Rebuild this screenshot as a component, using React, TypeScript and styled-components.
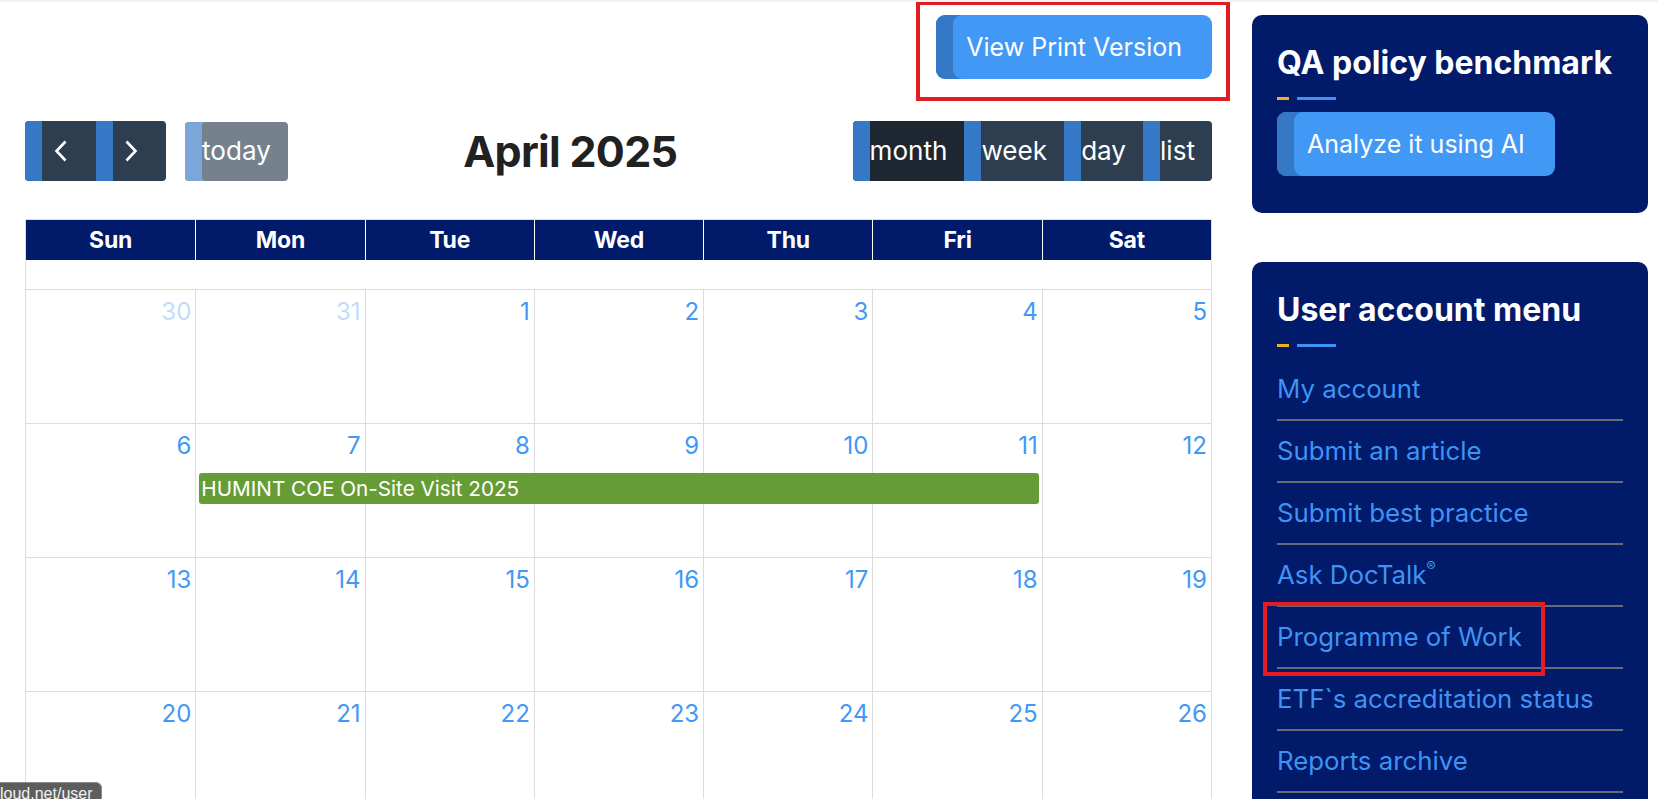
import React from "react";
import styled, { createGlobalStyle } from "styled-components";

const NAVY = "#011a6a";
const BLUE = "#4298f5";
const STRIPE = "#3478c6";
const FONT = `Inter, "Open Sans", "DejaVu Sans", sans-serif`;

const GlobalStyle = createGlobalStyle`
  html, body { margin: 0; padding: 0; background: #fff; overflow: hidden; }
  body { font-family: ${FONT}; }
  *, *::before, *::after { box-sizing: border-box; }
`;

const Page = styled.div`
  display: flex;
  align-items: flex-start;
  gap: 40px;
  height: 799px;
  overflow: hidden;
  padding: 13px 10px 0 25px;
  border-top: 2px solid #f3f3f3;
`;

const Main = styled.main`
  flex: none;
  width: 1187px;
  display: flex;
  flex-direction: column;
`;

const ActionRow = styled.div`
  display: flex;
  justify-content: flex-end;
  margin-bottom: 42px;
`;

const Annotated = styled.div`
  position: relative;
  display: flex;
`;

const RedBox = styled.span<{ $top: number; $left: number; $w: number; $h: number }>`
  position: absolute;
  top: ${(p) => p.$top}px;
  left: ${(p) => p.$left}px;
  width: ${(p) => p.$w}px;
  height: ${(p) => p.$h}px;
  border: 4px solid #e31b23;
  pointer-events: none;
  z-index: 5;
`;

const PrimaryButton = styled.button`
  display: inline-flex;
  align-items: center;
  height: 64px;
  padding: 0 30px;
  border: 0;
  border-radius: 9px;
  background: ${BLUE};
  box-shadow: inset 17px 0 0 ${STRIPE};
  color: #fff;
  font-family: ${FONT};
  font-size: 25px;
  font-weight: 400;
  white-space: nowrap;
  cursor: pointer;
`;

const Toolbar = styled.div`
  display: flex;
  justify-content: space-between;
  align-items: center;
  height: 60px;
  margin-bottom: 38px;
`;

const Chunk = styled.div`
  display: flex;
  align-items: center;
  gap: 19px;
`;

const BtnGroup = styled.div`
  display: flex;
  height: 60px;
  border-radius: 4px;
  overflow: hidden;
`;

const FcButton = styled.button<{ $active?: boolean; $w?: number }>`
  display: flex;
  align-items: center;
  justify-content: center;
  height: 60px;
  ${(p) => (p.$w ? `width: ${p.$w}px;` : "")}
  margin: 0;
  padding: 0 17px;
  border: 0;
  background: ${(p) => (p.$active ? "#1e2731" : "#2c3e50")};
  box-shadow: inset 17px 0 0 ${STRIPE};
  color: #fff;
  font-family: ${FONT};
  font-size: 26.1px;
  font-weight: 400;
  line-height: 1;
  cursor: pointer;
`;

const TodayButton = styled(FcButton)`
  height: 59px;
  border-radius: 4px;
  opacity: 0.65;
  cursor: default;
`;

const Title = styled.h2`
  margin: 0;
  font-family: ${FONT};
  font-size: 43px;
  font-weight: 700;
  letter-spacing: -0.7px;
  color: #212121;
`;

const Grid = styled.div`
  border: 1px solid #dddddd;
`;

const HeadRow = styled.div`
  display: grid;
  grid-template-columns: repeat(7, 1fr);
  height: 40px;
  background: ${NAVY};
`;

const HeadCell = styled.div`
  display: flex;
  align-items: center;
  justify-content: center;
  color: #fff;
  font-size: 23px;
  font-weight: 700;
  letter-spacing: -0.2px;
  & + & { border-left: 1px solid #fff; }
`;

const SpacerRow = styled.div`
  height: 30px;
  border-bottom: 1px solid #dddddd;
`;

const WeekRow = styled.div`
  display: grid;
  grid-template-columns: repeat(7, 1fr);
  grid-template-rows: 133px;
  border-bottom: 1px solid #dddddd;
`;

const DayCell = styled.div<{ $col: number; $other?: boolean }>`
  grid-row: 1;
  grid-column: ${(p) => p.$col};
  padding: 4px 4px 0 0;
  border-left: ${(p) => (p.$col === 1 ? "0" : "1px solid #dddddd")};
  text-align: right;
  font-size: 24px;
  line-height: 36px;
  color: ${BLUE};
  & > span { opacity: ${(p) => (p.$other ? 0.33 : 1)}; }
`;

const EventBar = styled.div<{ $from: number; $to: number }>`
  grid-row: 1;
  grid-column: ${(p) => p.$from} / ${(p) => p.$to};
  align-self: start;
  z-index: 1;
  height: 31px;
  margin: 49px 3px 0 4px;
  padding: 0 2px;
  border-radius: 3px;
  background: #669c35;
  color: #fff;
  font-size: 20.7px;
  line-height: 31px;
  white-space: nowrap;
  overflow: hidden;
`;

const Sidebar = styled.aside`
  flex: none;
  width: 396px;
  display: flex;
  flex-direction: column;
  gap: 49px;
`;

const Card = styled.section`
  display: flex;
  flex-direction: column;
  align-items: flex-start;
  padding: 29px 25px 37px;
  border-radius: 10px;
  background: ${NAVY};
`;

const CardTitle = styled.h2`
  margin: 0;
  color: #fff;
  font-size: 32px;
  line-height: 38px;
  font-weight: 700;
  letter-spacing: 0;
  white-space: nowrap;
`;

const Dashes = styled.div`
  display: flex;
  gap: 8px;
  margin: 15px 0 12px;
`;

const Dash = styled.span<{ $w: number; $c: string }>`
  width: ${(p) => p.$w}px;
  height: 3px;
  background: ${(p) => p.$c};
`;

const Menu = styled.ul`
  list-style: none;
  margin: 0;
  padding: 0;
  align-self: stretch;
`;

const MenuItem = styled.li`
  position: relative;
  padding: 12px 0;
  border-bottom: 2px solid #676a74;
`;

const MenuLink = styled.a`
  color: #3f93f4;
  font-size: 25.8px;
  line-height: 36px;
  text-decoration: none;
  white-space: nowrap;
  & sup { font-size: 0.55em; vertical-align: 0.85em; line-height: 0; }
`;

const StatusBubble = styled.div`
  position: fixed;
  left: 0;
  bottom: -7px;
  height: 24px;
  padding: 0 8px 0 0;
  border-top-right-radius: 6px;
  background: #5d5d5d;
  border: 1px solid #8a8a8a;
  border-left: 0;
  color: #f2f2f2;
  font-family: "Liberation Sans", Arial, sans-serif;
  font-size: 16px;
  line-height: 22px;
  white-space: nowrap;
  z-index: 10;
`;

const Chevron = ({ dir }: { dir: "left" | "right" }) => (
  <svg width="14" height="22" viewBox="0 0 14 22" fill="none">
    <polyline
      points={dir === "left" ? "11.5,1.5 2.5,11 11.5,20.5" : "2.5,1.5 11.5,11 2.5,20.5"}
      stroke="#fff"
      strokeWidth="2.6"
      strokeLinejoin="miter"
      strokeLinecap="butt"
    />
  </svg>
);

const DAYS = ["Sun", "Mon", "Tue", "Wed", "Thu", "Fri", "Sat"];

type Day = { n: number; other?: boolean };
const WEEKS: Day[][] = [
  [{ n: 30, other: true }, { n: 31, other: true }, { n: 1 }, { n: 2 }, { n: 3 }, { n: 4 }, { n: 5 }],
  [6, 7, 8, 9, 10, 11, 12].map((n) => ({ n })),
  [13, 14, 15, 16, 17, 18, 19].map((n) => ({ n })),
  [20, 21, 22, 23, 24, 25, 26].map((n) => ({ n })),
];

const MENU = [
  "My account",
  "Submit an article",
  "Submit best practice",
  "Ask DocTalk",
  "Programme of Work",
  "ETF`s accreditation status",
  "Reports archive",
];

export default function App() {
  return (
    <>
      <GlobalStyle />
      <Page>
        <Main>
          <ActionRow>
            <Annotated>
              <PrimaryButton>View Print Version</PrimaryButton>
              <RedBox $top={-14} $left={-20} $w={314} $h={100} />
            </Annotated>
          </ActionRow>

          <Toolbar>
            <Chunk>
              <BtnGroup>
                <FcButton $w={71} aria-label="prev">
                  <Chevron dir="left" />
                </FcButton>
                <FcButton $w={70} aria-label="next">
                  <Chevron dir="right" />
                </FcButton>
              </BtnGroup>
              <TodayButton disabled>today</TodayButton>
            </Chunk>
            <Title>April 2025</Title>
            <Chunk>
              <BtnGroup>
                <FcButton $active>month</FcButton>
                <FcButton>week</FcButton>
                <FcButton>day</FcButton>
                <FcButton>list</FcButton>
              </BtnGroup>
            </Chunk>
          </Toolbar>

          <Grid>
            <HeadRow>
              {DAYS.map((d) => (
                <HeadCell key={d}>{d}</HeadCell>
              ))}
            </HeadRow>
            <SpacerRow />
            {WEEKS.map((week, wi) => (
              <WeekRow key={wi}>
                {week.map((d, i) => (
                  <DayCell key={i} $col={i + 1} $other={d.other}>
                    <span>{d.n}</span>
                  </DayCell>
                ))}
                {wi === 1 && (
                  <EventBar $from={2} $to={7}>
                    HUMINT COE On-Site Visit 2025
                  </EventBar>
                )}
              </WeekRow>
            ))}
          </Grid>
        </Main>

        <Sidebar>
          <Card>
            <CardTitle>QA policy benchmark</CardTitle>
            <Dashes>
              <Dash $w={12} $c="#f2b01e" />
              <Dash $w={39} $c="#3f93f4" />
            </Dashes>
            <PrimaryButton>Analyze it using AI</PrimaryButton>
          </Card>

          <Card>
            <CardTitle>User account menu</CardTitle>
            <Dashes>
              <Dash $w={12} $c="#f2b01e" />
              <Dash $w={39} $c="#3f93f4" />
            </Dashes>
            <Menu>
              {MENU.map((m) => (
                <MenuItem key={m}>
                  <MenuLink href="#">
                    {m}
                    {m === "Ask DocTalk" && <sup>®</sup>}
                  </MenuLink>
                  {m === "Programme of Work" && <RedBox $top={-5} $left={-14} $w={282} $h={74} />}
                </MenuItem>
              ))}
            </Menu>
          </Card>
        </Sidebar>
      </Page>
      <StatusBubble>loud.net/user</StatusBubble>
    </>
  );
}
